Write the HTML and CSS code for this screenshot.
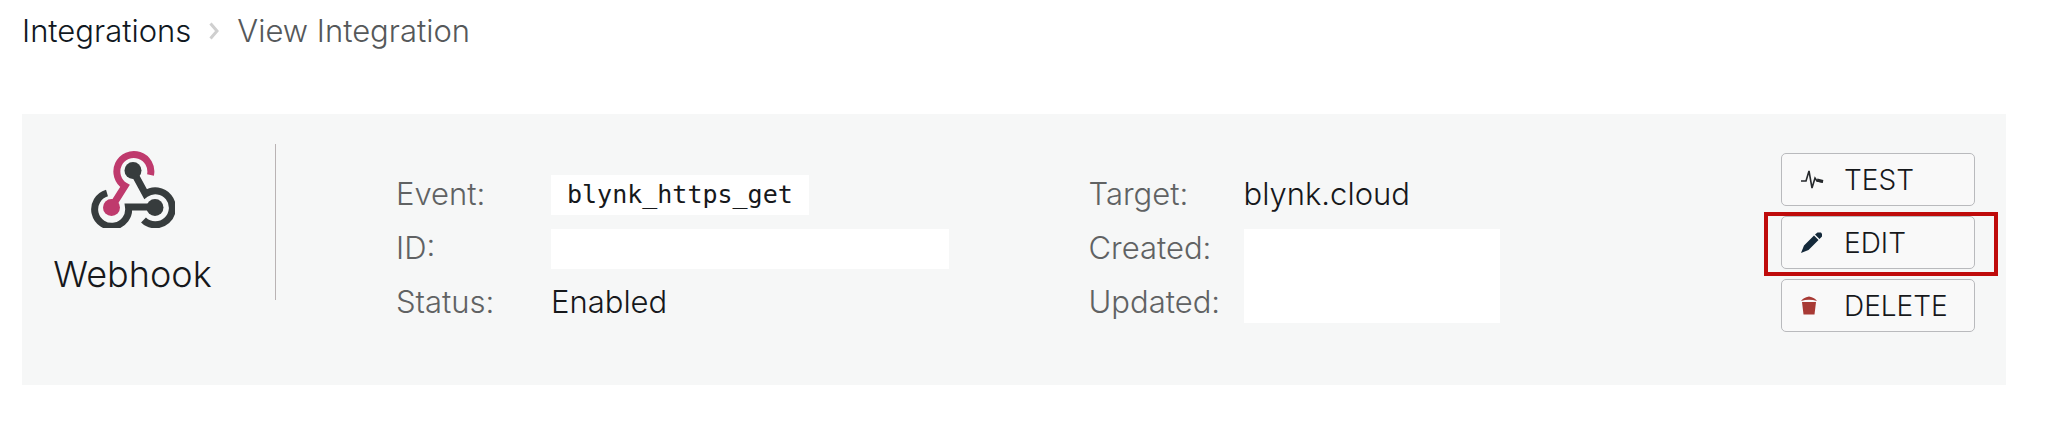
FILE: index.html
```html
<!DOCTYPE html>
<html lang="en">
  <head>
    <meta charset="UTF-8">
    <title>View Integration</title>
    <link rel="stylesheet" href="styles.css">
  </head>

  <body>
    <nav class="breadcrumb">
      <a href="#">Integrations</a>
      <svg class="chevron" viewBox="0 0 10 18"><path d="M1.500 1.500 L8 9 L1.500 16.500"/></svg>
      <span>View Integration</span>
    </nav>

    <main class="panel">
      <div class="brand">
        <svg class="logo" viewBox="0 0 84 78">
          <g fill="none" stroke="#373c3d" stroke-width="7">
            <path d="M42 21 L54.500 44 A17 17 0 1 1 52.500 70"/>
            <path d="M16 43 A17 17 0 1 0 37.500 57 H63"/>
          </g>
          <path d="M59.500 25 A17 17 0 1 0 34 36 L20 58" fill="none" stroke="#bf3a6d" stroke-width="7"/>
          <circle cx="42" cy="20.500" r="8.500" fill="#373c3d"/>
          <circle cx="64" cy="57.500" r="8.500" fill="#373c3d"/>
          <circle cx="20.500" cy="57.500" r="8.500" fill="#bf3a6d"/>
        </svg>
        <span class="brand-name">Webhook</span>
      </div>

      <div class="details">
        <dl class="fields">
          <dt>Event:</dt>
          <dd><code class="event">blynk_https_get</code></dd>
          <dt>ID:</dt>
          <dd class="blank id"></dd>
          <dt>Status:</dt>
          <dd>Enabled</dd>
        </dl>
        <dl class="fields">
          <dt>Target:</dt>
          <dd>blynk.cloud</dd>
          <dt>Created:</dt>
          <dd class="blank dates"></dd>
          <dt>Updated:</dt>
        </dl>
      </div>

      <div class="actions">
        <button type="button" class="button">
          <svg class="icon" viewBox="0 0 24 24"><path d="M1 13 H6 L9 3 L12 20 L15 10 L17 13 L23 14" fill="none" stroke="#26292c" stroke-width="1.600"/><path d="M17 12 L23 13.500" stroke="#26292c" stroke-width="3"/></svg>
          TEST
        </button>
        <div class="marked">
          <button type="button" class="button">
            <svg class="icon" viewBox="0 0 24 24"><path d="M1 22 L4 14.500 L14 4.500 L18.500 9 L8.500 19 Z M15 3.500 L17.500 1.500 H21 L22 3 V5.500 L19.500 8 Z" fill="#14293a"/></svg>
            EDIT
          </button>
        </div>
        <button type="button" class="button">
          <svg class="icon" viewBox="0 0 24 24"><path d="M1 7 Q3 3.500 9 2.500 Q15 3.500 17 7 Q9 4.500 1 7 Z M2 8 H16 L14.500 20.500 H3.500 Z" fill="#a83a35"/></svg>
          DELETE
        </button>
      </div>
    </main>
  </body>
</html>
```
FILE: styles.css
```css
* {
  box-sizing: border-box;
}

body {
  margin: 0;
  padding: 12px 44px 44px 22px;
  background: #fff;
  color: #16181b;
  font-family: Inter, "Liberation Sans", sans-serif;
  font-size: 31px;
  font-weight: 300;
  line-height: 38px;
}

.breadcrumb {
  display: flex;
  align-items: center;
  gap: 18px;
  margin-bottom: 64px;
  color: #55585a;
}

.breadcrumb a {
  color: #10181f;
  text-decoration: none;
}

.chevron {
  width: 10px;
  height: 18px;
  fill: none;
  stroke: #cfcfcf;
  stroke-width: 3;
}

.panel {
  display: flex;
  align-items: flex-start;
  padding: 30px 31px 53px 0;
  background: #f6f7f7;
}

.brand {
  display: flex;
  flex-direction: column;
  align-items: center;
  width: 254px;
  height: 156px;
  padding: 6px 32px 0 0;
  border-right: 1px solid #b9b3b4;
}

.logo {
  width: 84px;
  height: 78px;
  margin-bottom: 27px;
}

.brand-name {
  font-size: 36px;
}

.details {
  display: grid;
  flex: 1;
  grid-template-columns: 1fr 1fr;
  padding: 31px 0 0 120px;
}

.fields {
  display: grid;
  grid-template-columns: 155px 1fr;
  grid-auto-rows: 40px;
  row-gap: 14px;
  margin: 0;
}

.fields dt {
  color: #606263;
}

.fields dd {
  margin: 0;
}

.event {
  display: block;
  width: fit-content;
  padding: 0 16px;
  background: #fff;
  font-family: "DejaVu Sans Mono", monospace;
  font-size: 25px;
  line-height: 40px;
}

.blank {
  background: #fff;
}

.id {
  width: 398px;
}

.dates {
  grid-row: 2 / span 2;
  grid-column: 2;
  width: 256px;
}

.actions {
  display: flex;
  flex-direction: column;
  gap: 10px;
  width: 194px;
  padding-top: 9px;
}

.button {
  display: flex;
  align-items: center;
  gap: 20px;
  width: 100%;
  height: 53px;
  padding: 0 18px;
  border: 1px solid #b9babd;
  border-radius: 5px;
  background: #f9f9f9;
  color: #16181b;
  font-family: inherit;
  font-size: 28px;
  font-weight: 300;
}

.icon {
  flex: none;
  width: 24px;
  height: 24px;
}

.marked {
  position: relative;
}

/* red frame round the edit button */
.marked::after {
  content: "";
  position: absolute;
  inset: -4px -23px -7px -17px;
  border: 4px solid #bf0b0b;
  pointer-events: none;
}
```
